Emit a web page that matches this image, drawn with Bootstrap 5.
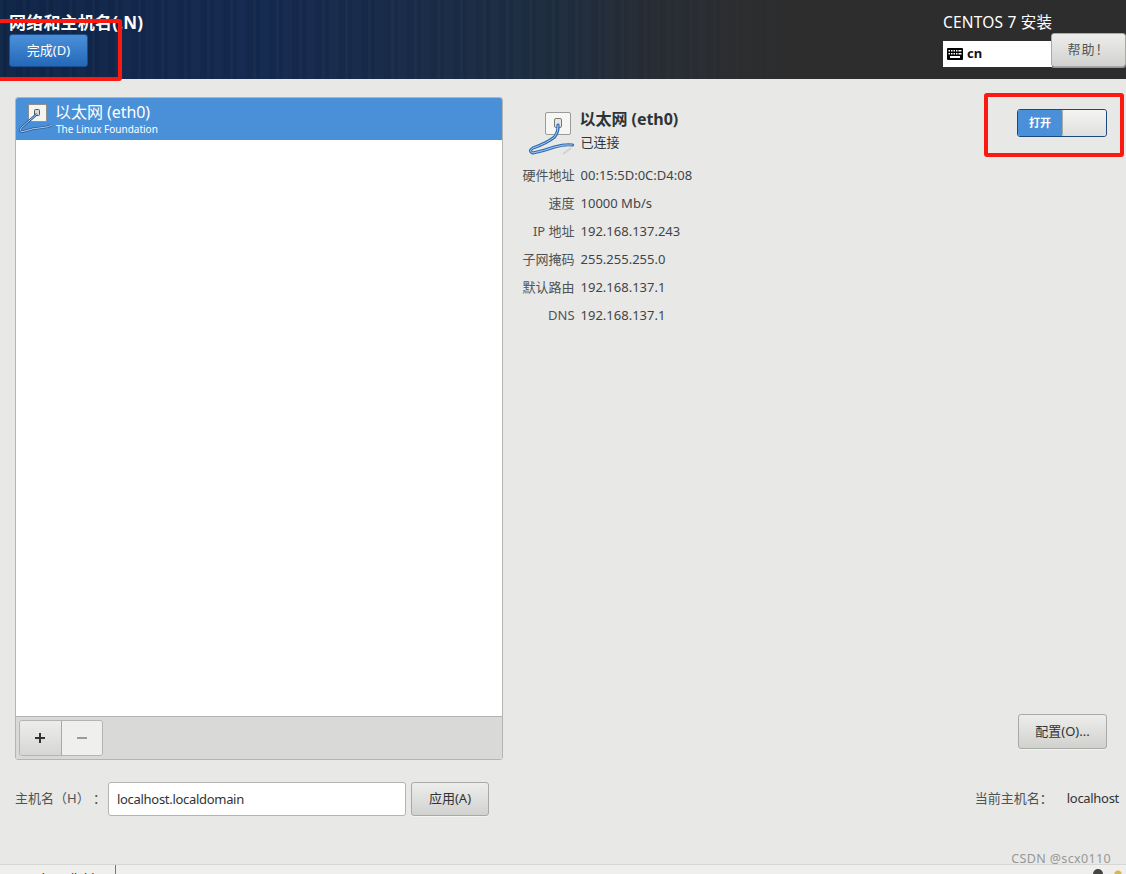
<!DOCTYPE html>
<html lang="zh-CN">
<head>
<meta charset="utf-8">
<title>网络和主机名</title>
<link href="https://cdn.jsdelivr.net/npm/bootstrap@5.3.0/dist/css/bootstrap.min.css" rel="stylesheet">
<style>
html,body{height:874px;overflow:hidden;}
body{position:relative;background:#e8e8e7;color:#2e3436;font-family:"Noto Sans","Noto Sans CJK SC",sans-serif;font-size:13px;line-height:1.2;text-spacing-trim:space-all;}
.hdr{height:79px;background:
 linear-gradient(90deg,rgba(45,45,45,0) 0,rgba(45,45,45,0) 560px,#2d2d2d 820px,#2d2d2d 100%),
 repeating-linear-gradient(90deg,rgba(255,255,255,.02) 0 3px,rgba(0,0,0,.025) 3px 7px,rgba(255,255,255,.012) 7px 16px,rgba(0,0,0,.02) 16px 23px),
 linear-gradient(90deg,#0f2547 0,#14294f 260px,#1b2c44 480px,#2b2d30 800px,#2d2d2d 100%);color:#fff;}
.hdr-left{width:200px;padding:13px 0 0 9px;}
.ttl{font-weight:700;font-size:17px;line-height:20px;height:21px;white-space:nowrap;letter-spacing:.2px;}
.gbtn{border:1px solid #a9aaa6;border-radius:3px;background:linear-gradient(#ededeb,#d1d1cf);color:#2e3436;font-size:13px;display:flex;align-items:center;justify-content:center;box-shadow:0 1px 0 rgba(255,255,255,.5);padding:0;}
.done{width:79px;height:33px;border:1px solid #1d4f8f;border-radius:3px;background:linear-gradient(#4a90d9,#2469b8);color:#fff;font-size:13px;padding:0;display:flex;align-items:center;justify-content:center;}
.hdr-right{width:183px;padding-top:13px;}
.prod{font-size:15.500px;line-height:18px;padding-bottom:2px;letter-spacing:.2px;}
.kbrow{height:34px;}
.kb{width:109px;height:26px;margin-top:8px;background:#fff;color:#111;font-weight:700;padding-left:4px;font-size:13px;gap:4px;}
.help{width:75px;height:34px;font-size:13px;margin-left:-1px;position:relative;color:#555753;letter-spacing:1px;font-family:"Noto Sans","Noto Sans CJK TC",sans-serif;}
.pane-wrap{height:785px;}
.leftp{width:488px;margin:18px 0 0 15px;}
.lst{height:663px;border:1px solid #b4b5b3;border-radius:3px;background:#fff;overflow:hidden;}
.sel{height:42px;background:#4a90d9;color:#fff;padding-left:3px;gap:3px;}
.sel .n1{font-size:16px;line-height:18px;letter-spacing:-.05px;margin-left:-1px;}
.sel .n2{font-size:10px;line-height:13px;margin-top:2px;}
.lspace{min-height:0;}
.tbar{height:43px;background:#d9d9d7;border-top:1px solid #b4b5b3;padding:3px 0 0 3px;}
.seg{width:84px;height:36px;border:1px solid #b4b5b3;border-radius:3px;overflow:hidden;}
.seg div{height:100%;display:flex;align-items:center;justify-content:center;}
.seg .plus{width:42px;padding-right:1px;background:linear-gradient(#ededeb,#d6d6d4);border-right:1px solid #a9aaa6;color:#2e3436;}
.seg .minus{flex:1;background:#efefee;color:#9a9c9a;}
.rightp{width:605px;margin:18px 19px 0 0;}
.dhead{gap:1px;margin-left:24px;height:60px;padding-top:13px;}
.dname{font-weight:700;font-size:16px;line-height:18px;letter-spacing:-.05px;}
.dsub{font-size:13px;line-height:16px;margin-top:6px;margin-left:1px;}
.kv{display:grid;grid-template-columns:59px auto;column-gap:6px;grid-auto-rows:28px;justify-content:start;margin-left:13px;margin-top:11px;font-size:13px;color:#3f4547;}
.kv .k{text-align:right;color:#4e5456;}
.sw{width:90px;height:28px;border:1px solid #1c4a7f;border-radius:3px;overflow:hidden;margin-top:12px;}
.sw .on{width:44px;background:#4a90d9;color:#fff;font-weight:700;font-size:11px;display:flex;align-items:center;justify-content:center;}
.sw .off{flex:1;background:linear-gradient(#f4f4f3,#dfdfde);border-left:1px solid #aaa;border-radius:2px;}
.conf{width:89px;height:35px;margin-left:auto;margin-bottom:11px;}
.hostrow{height:34px;margin:22px 0 0 15px;}
.hn-input{width:298px;height:34px;border:1px solid #b4b5b3;border-radius:3px;background:#fff;padding:0 8px 1px;font-size:13px;color:#2e3436;letter-spacing:-.3px;}
.hn-input:focus{outline:0;}
.apply{width:78px;height:34px;margin-left:5px;}
.hlabel{width:93px;color:#4e5456;white-space:nowrap;font-family:"Noto Sans","Noto Sans CJK TC",sans-serif;}
.curhost{margin-right:7px;color:#4e5456;font-family:"Noto Sans","Noto Sans CJK TC",sans-serif;}
.curhost span+span{margin-left:14px;color:#2e3436;letter-spacing:-.3px;}
.bbar{position:absolute;left:0;right:0;top:864px;height:10px;background:#efefee;border-top:1px solid #d6d6d4;overflow:hidden;font-size:12px;line-height:16px;color:#222;}
.bbar .cell{width:116px;height:10px;border-right:1px solid #777;padding-top:6px;white-space:nowrap;overflow:hidden;}
.wm{position:absolute;right:15px;top:851px;color:#969896;font-size:12.500px;letter-spacing:.35px;line-height:16px;}
.redbox{position:absolute;border:4px solid #fb1a12;border-radius:3px;pointer-events:none;}
.r1{left:-4px;top:19px;width:126px;height:62px;}
.r2{left:984px;top:93px;width:140px;height:64px;}
.bico{position:absolute;right:0;top:0;}
</style>
</head>
<body>
<header class="hdr d-flex justify-content-between">
  <div class="hdr-left">
    <div class="ttl">网络和主机名(.N)</div>
    <button class="done" type="button">完成(D)</button>
  </div>
  <div class="hdr-right">
    <div class="prod">CENTOS 7 安装</div>
    <div class="kbrow d-flex">
      <div class="kb d-flex align-items-center">
        <svg width="16" height="12" viewBox="0 0 16 12"><rect width="16" height="12" rx="1" fill="#000"/><g fill="#fff"><rect x="1.500" y="2" width="1.500" height="1.500"/><rect x="4" y="2" width="1.500" height="1.500"/><rect x="6.500" y="2" width="1.500" height="1.500"/><rect x="9" y="2" width="1.500" height="1.500"/><rect x="11.500" y="2" width="3" height="1.500"/><rect x="1.500" y="5" width="1.500" height="1.500"/><rect x="4" y="5" width="1.500" height="1.500"/><rect x="6.500" y="5" width="1.500" height="1.500"/><rect x="9" y="5" width="1.500" height="1.500"/><rect x="11.500" y="5" width="3" height="1.500"/><rect x="3" y="8" width="10" height="2"/></g></svg>
        <span>cn</span>
      </div>
      <button class="gbtn help" type="button">帮助！</button>
    </div>
  </div>
</header>
<main class="pane-wrap d-flex flex-column">
  <div class="d-flex justify-content-between">
    <section class="leftp">
      <div class="lst d-flex flex-column">
        <div class="sel d-flex align-items-center">
          <svg width="34" height="34" viewBox="0 0 34 34" class="flex-shrink-0">
            <rect x="9.500" y="2.500" width="18" height="17" fill="#f4f4f2" stroke="#8e908e"/>
            <rect x="15.500" y="7.500" width="5" height="6" rx="1" fill="#d8d8d6" stroke="#555"/>
            <path d="M18 12 L3 25 Q-1 30 4 29.500 Q14 26 24 25.500 Q30 25 33 23" fill="none" stroke="#2c5d99" stroke-width="2.400"/>
            <path d="M18 12 L3 25 Q-1 30 4 29.500 Q14 26 24 25.500 Q30 25 33 23" fill="none" stroke="#a9c9ec" stroke-width="1"/>
          </svg>
          <div>
            <div class="n1">以太网 (eth0)</div>
            <div class="n2">The Linux Foundation</div>
          </div>
        </div>
        <div class="lspace flex-grow-1"></div>
        <div class="tbar">
          <div class="seg d-flex">
            <div class="plus"><svg width="12" height="12" viewBox="0 0 12 12"><path d="M6 1v10M1 6h10" stroke="#2e3436" stroke-width="2"/></svg></div>
            <div class="minus"><svg width="12" height="12" viewBox="0 0 12 12"><path d="M1 6h10" stroke="#9a9c9a" stroke-width="2"/></svg></div>
          </div>
        </div>
      </div>
    </section>
    <section class="rightp d-flex flex-column">
      <div class="d-flex justify-content-between">
        <div class="dhead d-flex">
          <svg width="52" height="47" viewBox="0 0 52 47" class="flex-shrink-0">
            <path d="M36 44 L44 38" stroke="#cfd2d4" stroke-width="2" fill="none"/>
            <rect x="18.500" y="2.500" width="25" height="22" rx="1.500" fill="#f6f6f4" stroke="#9a9c9a"/>
            <rect x="27.500" y="8.500" width="7" height="9" rx="1.500" fill="#e6e6e4" stroke="#777"/>
            <path d="M31 15 Q31.500 22 27.500 27 Q20 33 6 38 Q1 41 6 43 Q16 41 27.500 37 Q38 34 45.500 35" fill="none" stroke="#2f6cb3" stroke-width="3.200" stroke-linecap="round"/>
            <path d="M31 15 Q31.500 22 27.500 27 Q20 33 6 38 Q1 41 6 43 Q16 41 27.500 37 Q38 34 45.500 35" fill="none" stroke="#a9cdf0" stroke-width="1"/>
          </svg>
          <div>
            <div class="dname">以太网 (eth0)</div>
            <div class="dsub">已连接</div>
          </div>
        </div>
        <div class="sw d-flex"><div class="on">打开</div><div class="off"></div></div>
      </div>
      <div class="kv">
        <div class="k">硬件地址</div><div>00:15:5D:0C:D4:08</div>
        <div class="k">速度</div><div>10000 Mb/s</div>
        <div class="k">IP 地址</div><div>192.168.137.243</div>
        <div class="k">子网掩码</div><div>255.255.255.0</div>
        <div class="k">默认路由</div><div>192.168.137.1</div>
        <div class="k">DNS</div><div>192.168.137.1</div>
      </div>
      <div class="flex-grow-1"></div>
      <button class="gbtn conf" type="button">配置(O)...</button>
    </section>
  </div>
  <div class="hostrow d-flex align-items-center">
    <span class="hlabel">主机名（H） ：</span>
    <input class="hn-input" type="text" value="localhost.localdomain">
    <button class="gbtn apply" type="button">应用(A)</button>
    <div class="curhost ms-auto"><span>当前主机名：</span><span>localhost</span></div>
  </div>
</main>
<footer class="bbar d-flex">
  <div class="cell">Network available</div>
  <svg class="bico" width="40" height="10" viewBox="0 0 40 10"><circle cx="12" cy="9" r="5" fill="#444"/><circle cx="32" cy="9" r="3.500" fill="#d8b84a"/></svg>
</footer>
<div class="wm">CSDN @scx0110</div>
<div class="redbox r1"></div>
<div class="redbox r2"></div>
<script src="https://cdn.jsdelivr.net/npm/bootstrap@5.3.0/dist/js/bootstrap.bundle.min.js"></script>
</body>
</html>
